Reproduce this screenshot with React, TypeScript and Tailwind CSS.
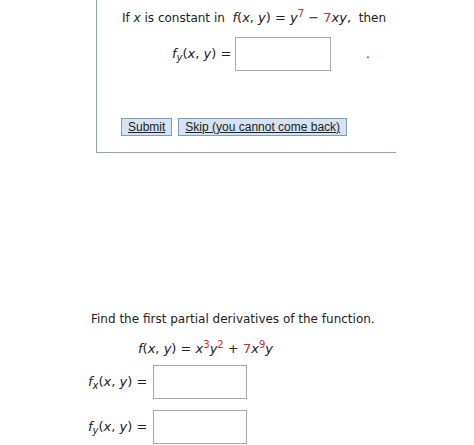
const red = 'text-[#e2232a]';

function Box({ className }: { className?: string }) {
  return <div className={'border border-[#a9a9a9] bg-white ' + (className ?? '')} />;
}

function Btn({ children }: { children: React.ReactNode }) {
  return (
    <button className="h-[18px] px-[6px] bg-[#d4e2f1] border border-[#7f9db9] font-['Liberation_Sans'] text-[12px] leading-[16px] text-[#222] underline">
      {children}
    </button>
  );
}

export default function App() {
  return (
    <div className="w-[474px] h-[445px] bg-white text-[#222] font-['DejaVu_Sans',sans-serif] text-[12px] leading-[16px] overflow-hidden">
      {/* top question panel */}
      <div className="ml-[96px] w-[300px] h-[153px] border-l border-b border-[#8ea2b8] pl-[25px] pt-[10px]">
        <p className="whitespace-nowrap">
          If <i>x</i> is constant in&nbsp;{' '}
          <span className="text-[13px]">
            <i>f</i>(<i>x</i>, <i>y</i>) = <i>y</i>
            <sup className={red + ' text-[10px]'}>7</sup> − <span className={red}>7</span>
            <i>xy</i>,
          </span>
          &nbsp; then
        </p>
        <div className="flex items-center mt-[11px] ml-[50px]">
          <span className="w-[63px] text-[13px] whitespace-nowrap">
            <i>f</i>
            <sub className="text-[10px]">
              <i>y</i>
            </sub>
            (<i>x</i>, <i>y</i>) =
          </span>
          <Box className="w-[96px] h-[34px]" />
          <span className="ml-[35px]">.</span>
        </div>
        <div className="flex gap-[6px] mt-[47px] -ml-[1px]">
          <Btn>Submit</Btn>
          <Btn>Skip (you cannot come back)</Btn>
        </div>
      </div>

      {/* second question */}
      <div className="pl-[91px] pt-[158px]">
        <p className="whitespace-nowrap">Find the first partial derivatives of the function.</p>
        <p className="ml-[47px] mt-[14px] text-[13px] whitespace-nowrap">
          <i>f</i>(<i>x</i>, <i>y</i>) = <i>x</i>
          <sup className={red + ' text-[10px]'}>3</sup>
          <i>y</i>
          <sup className={red + ' text-[10px]'}>2</sup> + <span className={red}>7</span>
          <i>x</i>
          <sup className={red + ' text-[10px]'}>9</sup>
          <i>y</i>
        </p>
        <div className="-ml-[3px] mt-[8px] flex flex-col gap-[11px]">
          <div className="flex items-center">
            <span className="w-[65px] text-[13px] whitespace-nowrap">
              <i>f</i>
              <sub className="text-[10px]">
                <i>x</i>
              </sub>
              (<i>x</i>, <i>y</i>) =
            </span>
            <Box className="w-[94px] h-[34px]" />
          </div>
          <div className="flex items-center">
            <span className="w-[65px] text-[13px] whitespace-nowrap">
              <i>f</i>
              <sub className="text-[10px]">
                <i>y</i>
              </sub>
              (<i>x</i>, <i>y</i>) =
            </span>
            <Box className="w-[94px] h-[34px]" />
          </div>
        </div>
      </div>
    </div>
  );
}
